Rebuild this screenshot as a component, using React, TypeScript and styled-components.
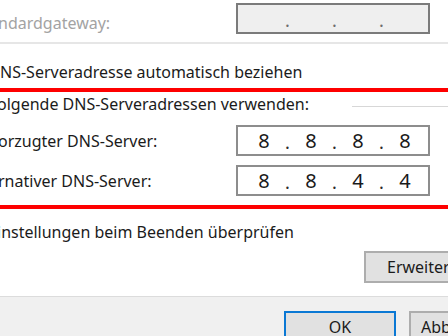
import React from 'react';
import styled, { createGlobalStyle, css } from 'styled-components';

const GlobalStyle = createGlobalStyle`
  html, body {
    margin: 0;
    padding: 0;
    background: #ffffff;
    overflow: hidden;
  }
`;

const textFont = css`
  font-family: "Noto Sans", "Open Sans", sans-serif;
  font-size: 16px;
  line-height: 20px;
  color: #1b1b1b;
  white-space: nowrap;
`;

const Dialog = styled.div`
  width: 448px;
  height: 336px;
  overflow: hidden;
  background: #ffffff;
  display: flex;
  flex-direction: column;

  & > * {
    flex-shrink: 0;
  }
`;

const GatewayRow = styled.div`
  height: 44px;
  display: flex;
  align-items: flex-start;
  padding-top: 3px;
  box-sizing: border-box;
  border-bottom: 2px solid #e6e6e6;
`;

const Label = styled.div<{ disabled?: boolean; shift?: number }>`
  ${textFont}
  width: 238px;
  flex-shrink: 0;
  margin-left: ${({ shift }) => shift ?? 0}px;
  ${({ disabled }) => disabled && css`color: #a3a3a3;`}
`;

const FieldLabel = styled(Label)`
  align-self: center;
`;

const GroupTitle = styled(Label)`
  width: auto;
`;

const IpBox = styled.div<{ disabled?: boolean }>`
  width: 194px;
  height: 31px;
  box-sizing: border-box;
  border: 2px solid ${({ disabled }) => (disabled ? '#7b7b7b' : '#8d8d8d')};
  background: ${({ disabled }) => (disabled ? '#efefef' : '#ffffff')};
  display: flex;
  align-items: center;
  padding-left: 8px;
  flex-shrink: 0;
`;

const Octet = styled.span`
  width: 36px;
  text-align: center;
  font-family: "Noto Sans", "Open Sans", sans-serif;
  font-size: 20px;
  line-height: 27px;
  color: #1a1a1a;
`;

const Dot = styled.span<{ disabled?: boolean }>`
  width: 11px;
  text-align: center;
  font-family: "Noto Sans", sans-serif;
  font-size: 18px;
  line-height: 27px;
  color: ${({ disabled }) => (disabled ? '#6d6d6d' : '#2a2a2a')};
  padding-top: 3px;
`;

const RadioRow = styled.div<{ top: number; bottom: number }>`
  display: flex;
  align-items: center;
  padding-top: ${({ top }) => top}px;
  padding-bottom: ${({ bottom }) => bottom}px;
`;

const GroupRule = styled.div`
  flex: 0 0 96px;
  margin-left: auto;
  height: 0;
  border-top: 1px solid #d7d7d7;
  margin-top: 4px;
`;

const Highlight = styled.section`
  border-top: 4px solid #fe0000;
  border-bottom: 4px solid #fe0000;
  padding-bottom: 9px;
`;

const Fields = styled.div`
  display: flex;
  flex-direction: column;
  gap: 9px;
  padding-top: 11px;
`;

const FieldRow = styled.div`
  display: flex;
`;

const CheckRow = styled.div`
  padding-top: 13px;
  display: flex;
`;

const ButtonRow = styled.div<{ left: number }>`
  display: flex;
  padding-left: ${({ left }) => left}px;
  gap: 13px;
`;

const Button = styled.div<{ primary?: boolean; pad?: number }>`
  ${textFont}
  flex-shrink: 0;
  width: 112px;
  height: 32px;
  box-sizing: border-box;
  background: #e1e1e1;
  border: 2px solid ${({ primary }) => (primary ? '#0a78d4' : '#adadad')};
  display: flex;
  align-items: center;
  justify-content: ${({ pad }) => (pad === undefined ? 'center' : 'flex-start')};
  padding-left: ${({ pad }) => pad ?? 0}px;
`;

const AdvancedRow = styled(ButtonRow)`
  margin-top: 9px;
`;

const Footer = styled.footer`
  margin-top: 13px;
  flex: 1 0 auto;
  background: #f0f0f0;
  border-top: 1px solid #dcdcdc;
  padding-top: 14px;
`;

const IpValue: React.FC<{ parts: string[]; disabled?: boolean }> = ({ parts, disabled }) => (
  <IpBox disabled={disabled}>
    {parts.map((p, i) => (
      <React.Fragment key={i}>
        <Octet>{p}</Octet>
        {i < parts.length - 1 && <Dot disabled={disabled}>.</Dot>}
      </React.Fragment>
    ))}
  </IpBox>
);

const App: React.FC = () => (
  <>
    <GlobalStyle />
    <Dialog>
      <GatewayRow>
        <FieldLabel disabled shift={-2}>ndardgateway:</FieldLabel>
        <IpValue disabled parts={['', '', '', '']} />
      </GatewayRow>

      <RadioRow top={18} bottom={6}>
        <Label>NS-Serveradresse automatisch beziehen</Label>
      </RadioRow>

      <Highlight>
        <RadioRow top={2} bottom={0}>
          <GroupTitle shift={-3}>olgende DNS-Serveradressen verwenden:</GroupTitle>
          <GroupRule />
        </RadioRow>
        <Fields>
          <FieldRow>
            <FieldLabel shift={-2}>orzugter DNS-Server:</FieldLabel>
            <IpValue parts={['8', '8', '8', '8']} />
          </FieldRow>
          <FieldRow>
            <FieldLabel shift={-2}>rnativer DNS-Server:</FieldLabel>
            <IpValue parts={['8', '8', '4', '4']} />
          </FieldRow>
        </Fields>
      </Highlight>

      <CheckRow>
        <Label shift={-3}>instellungen beim Beenden überprüfen</Label>
      </CheckRow>

      <AdvancedRow left={364}>
        <Button pad={21}>Erweiter</Button>
      </AdvancedRow>

      <Footer>
        <ButtonRow left={284}>
          <Button primary>OK</Button>
          <Button pad={10}>Abb</Button>
        </ButtonRow>
      </Footer>
    </Dialog>
  </>
);

export default App;
